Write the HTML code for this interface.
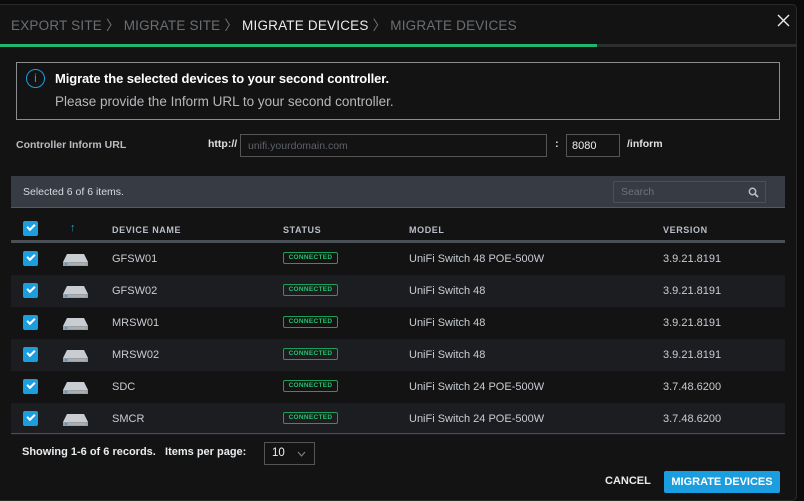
<!DOCTYPE html>
<html><head><style>
*{box-sizing:border-box;margin:0;padding:0}
html,body{width:804px;height:501px;overflow:hidden}
body{background:#0b0b0b;font-family:"Liberation Sans",sans-serif;position:relative;color:#d0d3d8}
.modal{position:absolute;left:-4px;top:4px;width:801px;height:497px;background:#131313;border:1px solid #2a2a2a;border-radius:5px}
.a{position:absolute}
.crumb{left:11px;top:14px;font-size:13.5px;letter-spacing:.2px;color:#6a6f74;white-space:nowrap}
.crumb b{font-weight:normal;color:#e8ecef}
.crumb i{font-style:normal;margin:0 4px;color:#777}
.box{left:16px;top:62px;width:764px;height:58px;border:1px solid #8a8d90}
.row{position:absolute;left:11px;width:774px;height:32px;font-size:11px;color:#c8ccd2}
.row.alt{background:#1c1d21}
.row span{position:absolute;top:10px}
.cb{position:absolute;left:12px;top:8px;width:15px;height:15px;background:#1a9ee0;border-radius:2px}
.cb:after{content:"";position:absolute;left:4px;top:3px;width:6px;height:3px;border-left:2px solid #fff;border-bottom:2px solid #fff;transform:rotate(-45deg)}
.dev{position:absolute;left:52px;top:10px;width:25px;height:13px}
.st{position:absolute;left:272px;top:9px;width:55px;height:12px;border:1px solid #1b9e5a;border-radius:2px;color:#22c46e;font-size:6.5px;font-weight:bold;text-align:center;line-height:10px;letter-spacing:.3px}
.hd{font-size:9px;font-weight:bold;color:#b8bfc8;letter-spacing:.6px;top:225px}
</style></head><body>
<div class="modal"></div>
<div class="a crumb">EXPORT SITE<i>〉</i>MIGRATE SITE<i>〉</i><b>MIGRATE DEVICES</b><i>〉</i>MIGRATE DEVICES</div>
<svg class="a" style="left:777px;top:14px" width="13" height="13" viewBox="0 0 13 13"><path d="M1 1L12 12M12 1L1 12" stroke="#e8ecef" stroke-width="1.4"/></svg>
<div class="a" style="left:0;top:44px;width:797px;height:3px;background:#2e2e2e"></div>
<div class="a" style="left:0;top:44px;width:597px;height:3px;background:#1fb672"></div>
<div class="a box"></div>
<div class="a" style="left:26px;top:69px;width:19px;height:19px;border:1.5px solid #1a9ee0;border-radius:50%;color:#1a9ee0;font-size:12px;text-align:center;line-height:16px">i</div>
<div class="a" style="left:55px;top:71px;font-size:13px;font-weight:bold;color:#fff;letter-spacing:-.1px">Migrate the selected devices to your second controller.</div>
<div class="a" style="left:55px;top:94px;font-size:13.5px;color:#b5b8bb">Please provide the Inform URL to your second controller.</div>
<div class="a" style="left:16px;top:139px;font-size:10.5px;font-weight:bold;color:#b8bcc0">Controller Inform URL</div>
<div class="a" style="left:208px;top:138px;font-size:10.5px;font-weight:bold;color:#e0e0e0">http://</div>
<div class="a" style="left:240px;top:134px;width:307px;height:23px;border:1px solid #555;font-size:10.5px;color:#5d6268;padding:5px 7px">unifi.yourdomain.com</div>
<div class="a" style="left:555px;top:138px;font-size:11px;color:#ddd;font-weight:bold">:</div>
<div class="a" style="left:566px;top:134px;width:54px;height:23px;border:1px solid #555;font-size:11px;color:#eee;padding:5px 5px">8080</div>
<div class="a" style="left:627px;top:138px;font-size:10.5px;font-weight:bold;color:#e0e0e0">/inform</div>
<div class="a" style="left:11px;top:176px;width:774px;height:32px;background:#363b44;border-bottom:1px solid #555a60"></div>
<div class="a" style="left:23px;top:186px;font-size:10.5px;color:#d8dce0">Selected 6 of 6 items.</div>
<div class="a" style="left:613px;top:181px;width:153px;height:22px;border:1px solid #4a505a;font-size:10.5px;color:#6e747c;padding:4px 7px">Search<svg style="position:absolute;right:6px;top:5px" width="11" height="11" viewBox="0 0 11 11"><circle cx="4.5" cy="4.5" r="3.2" fill="none" stroke="#b8bec6" stroke-width="1.5"/><path d="M7 7l3 3" stroke="#b8bec6" stroke-width="1.8"/></svg></div>
<div class="row" style="top:211px;height:32px">
 <div class="cb" style="top:10px"></div>
 <span style="left:59px;top:11px;color:#1a9ee0;font-size:11px">↑</span>
</div>
<div class="a hd" style="left:112px">DEVICE NAME</div>
<div class="a hd" style="left:283px">STATUS</div>
<div class="a hd" style="left:409px">MODEL</div>
<div class="a hd" style="left:663px">VERSION</div>
<div class="a" style="left:11px;top:240px;width:774px;height:3px;background:#4a4f55"></div>
<div id="rows"></div>
<div class="a" style="left:11px;top:433px;width:774px;height:1px;background:#4a4f55"></div>
<div class="a" style="left:22px;top:446px;font-size:11px;font-weight:bold;color:#e8ecef">Showing 1-6 of 6 records.&nbsp;&nbsp;&nbsp;Items per page:</div>
<div class="a" style="left:264px;top:442px;width:51px;height:23px;border:1px solid #555;font-size:11.5px;color:#eee;padding:4px 7px">10<svg style="position:absolute;left:32px;top:8px" width="9" height="6" viewBox="0 0 9 6"><path d="M1 1l3.5 4L8 1" fill="none" stroke="#888"/></svg></div>
<div class="a" style="left:605px;top:475px;font-size:11px;font-weight:bold;color:#e8ecef">CANCEL</div>
<div class="a" style="left:664px;top:471px;width:116px;height:22px;background:#1a9ee0;border-radius:2px;font-size:11px;font-weight:bold;color:#fff;text-align:center;line-height:22px">MIGRATE DEVICES</div>
<script>
var d=[["GFSW01","UniFi Switch 48 POE-500W","3.9.21.8191"],["GFSW02","UniFi Switch 48","3.9.21.8191"],["MRSW01","UniFi Switch 48","3.9.21.8191"],["MRSW02","UniFi Switch 48","3.9.21.8191"],["SDC","UniFi Switch 24 POE-500W","3.7.48.6200"],["SMCR","UniFi Switch 24 POE-500W","3.7.48.6200"]];
var h="";
var svg='<svg class="dev" viewBox="0 0 25 13"><path d="M4 1h17l4 8H0z" fill="#c9cdd1"/><rect x="0" y="9" width="25" height="4" fill="#9aa0a6"/><rect x="2" y="10" width="2" height="2" fill="#3aa0e0"/><path d="M5 11h18" stroke="#d8dcdf" stroke-width=".6"/></svg>';
d.forEach(function(r,i){h+='<div class="row'+(i%2?' alt':'')+'" style="top:'+(243+i*32)+'px"><div class="cb"></div>'+svg+'<span style="left:101px">'+r[0]+'</span><div class="st">CONNECTED</div><span style="left:398px">'+r[1]+'</span><span style="left:652px">'+r[2]+'</span></div>'});
document.getElementById("rows").outerHTML=h;
</script>
</body></html>
